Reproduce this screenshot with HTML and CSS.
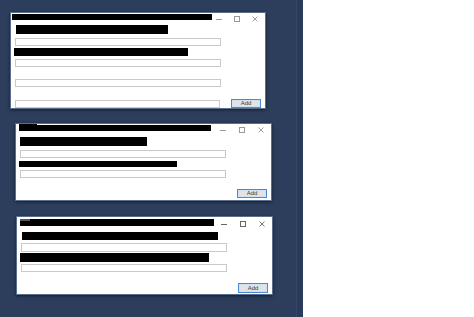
FILE: index.html
```html
<!DOCTYPE html>
<html lang="en">
<head>
<meta charset="utf-8">
<title>Add dialogs</title>
<link rel="stylesheet" href="styles.css">
</head>
<body>
<div class="page">
  <div class="desktop">
    <section class="win win-1">
      <header class="titlebar">
        <div class="redact title"></div>
        <div class="controls">
          <span class="ctl"><svg width="6" height="6" viewBox="0 0 6 6"><path d="M0 3.5H6" stroke="#9a9a9a" stroke-width="1"/></svg></span>
          <span class="ctl"><svg width="6" height="6" viewBox="0 0 6 6"><rect x="0.5" y="0.5" width="5" height="5" fill="none" stroke="#9a9a9a" stroke-width="1"/></svg></span>
          <span class="ctl"><svg width="6" height="6" viewBox="0 0 6 6"><path d="M0.5 0.5L5.5 5.5M5.5 0.5L0.5 5.5" stroke="#9a9a9a" stroke-width="0.9"/></svg></span>
        </div>
      </header>
      <div class="body">
        <div class="redact label l1"></div>
        <div class="field f1"></div>
        <div class="redact label l2"></div>
        <div class="field f2"></div>
        <div class="field f3"></div>
        <div class="row r-last">
          <div class="field"></div>
          <button class="btn" type="button">Add</button>
        </div>
      </div>
    </section>

    <section class="win win-2">
      <header class="titlebar">
        <div class="redact title"><span class="notch"></span></div>
        <div class="controls">
          <span class="ctl"><svg width="6" height="6" viewBox="0 0 6 6"><path d="M0 3.5H6" stroke="#9a9a9a" stroke-width="1"/></svg></span>
          <span class="ctl"><svg width="6" height="6" viewBox="0 0 6 6"><rect x="0.5" y="0.5" width="5" height="5" fill="none" stroke="#9a9a9a" stroke-width="1"/></svg></span>
          <span class="ctl"><svg width="6" height="6" viewBox="0 0 6 6"><path d="M0.5 0.5L5.5 5.5M5.5 0.5L0.5 5.5" stroke="#9a9a9a" stroke-width="0.9"/></svg></span>
        </div>
      </header>
      <div class="body">
        <div class="redact label l1"></div>
        <div class="field f1"></div>
        <div class="redact label l2"></div>
        <div class="field f2"></div>
        <div class="row r-last">
          <button class="btn" type="button">Add</button>
        </div>
      </div>
    </section>

    <section class="win win-3">
      <header class="titlebar">
        <div class="redact title"><span class="notch"></span></div>
        <div class="controls">
          <span class="ctl"><svg width="6" height="6" viewBox="0 0 6 6"><path d="M0 3.5H6" stroke="#666" stroke-width="1"/></svg></span>
          <span class="ctl"><svg width="6" height="6" viewBox="0 0 6 6"><rect x="0.5" y="0.5" width="5" height="5" fill="none" stroke="#666" stroke-width="1"/></svg></span>
          <span class="ctl"><svg width="6" height="6" viewBox="0 0 6 6"><path d="M0.5 0.5L5.5 5.5M5.5 0.5L0.5 5.5" stroke="#666" stroke-width="0.9"/></svg></span>
        </div>
      </header>
      <div class="body">
        <div class="redact label l1"></div>
        <div class="field f1"></div>
        <div class="redact label l2"></div>
        <div class="field f2"></div>
        <div class="row r-last">
          <button class="btn" type="button">Add</button>
        </div>
      </div>
    </section>
  </div>
  <div class="rest"></div>
</div>
</body>
</html>
```

FILE: styles.css
```css
html, body {
  margin: 0;
  padding: 0;
  background: #ffffff;
  font-family: "Liberation Sans", Arial, sans-serif;
}

.page {
  display: flex;
  width: 474px;
  height: 317px;
}

.desktop {
  position: relative;
  width: 303px;
  height: 317px;
  background: #2d3e5d;
  box-shadow: inset -6px 0 0 #2a3a58, inset -7px 0 0 #34476a;
}

.rest {
  flex: 1;
  background: #ffffff;
}

.win {
  position: absolute;
  box-sizing: border-box;
  background: #ffffff;
  border: 1px solid #5c6e8e;
  box-shadow: 0 1px 3px rgba(0, 0, 0, 0.55);
}

.win-1 { left: 10px; top: 12px; width: 256px; height: 97px; }
.win-2 { left: 15px; top: 123px; width: 257px; height: 78px; }
.win-3 { left: 16px; top: 216px; width: 257px; height: 79px; }

.titlebar {
  display: flex;
  align-items: flex-start;
  height: 10px;
  padding: 1px 0 0 1px;
}

.redact {
  background: #000000;
}

.title {
  position: relative;
  height: 6px;
}

.win-1 .title { width: 200px; }
.win-2 .title { width: 192px; margin-left: 2px; }
.win-3 .title { width: 194px; margin-left: 2px; margin-top: 1px; height: 7px; }

.notch {
  position: absolute;
  left: 0;
  top: -1px;
  width: 18px;
  height: 3px;
  background: #000000;
}

.win-3 .notch { width: 10px; height: 2px; top: 0; background: #555; }

.controls {
  display: flex;
  margin-left: auto;
  margin-right: 5px;
  gap: 12px;
  padding-top: 2px;
}

.ctl {
  display: flex;
  width: 6px;
  height: 6px;
}

.win-1 .controls { margin-right: 7px; }
.win-2 .controls { margin-right: 7px; gap: 13px; }
.win-3 .controls { margin-right: 7px; gap: 13px; padding-top: 3px; }

.body {
  display: flex;
  flex-direction: column;
  align-items: flex-start;
  padding-left: 4px;
}

.label {
  height: 8px;
}

.field {
  box-sizing: border-box;
  width: 206px;
  height: 8px;
  border: 1px solid #c9c9c9;
  background: #ffffff;
}

.row {
  display: flex;
  align-self: stretch;
  align-items: center;
  justify-content: flex-end;
  gap: 11px;
  padding-right: 4px;
}

.btn {
  box-sizing: border-box;
  width: 30px;
  height: 9px;
  padding: 0;
  border: 1px solid #4a8ad0;
  background: #e3e3e3;
  box-shadow: inset 0 0 0 1px #cfe1f5;
  color: #3a3a3a;
  font-family: "Liberation Sans", Arial, sans-serif;
  font-size: 6px;
  line-height: 7px;
}

/* window 1 */
.win-1 .l1 { width: 152px; height: 9px; margin: 1px 0 0 1px; }
.win-1 .f1 { margin-top: 4px; }
.win-1 .l2 { width: 174px; margin: 2px 0 0 -1px; }
.win-1 .f2 { margin-top: 3px; }
.win-1 .f3 { margin-top: 12px; }
.win-1 .r-last { margin-top: 12px; justify-content: flex-start; }

/* window 2 */
.win-2 .l1 { width: 127px; height: 9px; margin-top: 2px; }
.win-2 .f1 { margin-top: 4px; }
.win-2 .l2 { width: 158px; height: 6px; margin: 3px 0 0 -1px; }
.win-2 .f2 { margin-top: 3px; }
.win-2 .r-last { margin-top: 11px; }

/* window 3 */
.win-3 .l1 { width: 196px; height: 8px; margin: 4px 0 0 1px; }
.win-3 .f1 { margin-top: 3px; height: 9px; }
.win-3 .l2 { width: 189px; height: 9px; margin: 1px 0 0 -1px; }
.win-3 .f2 { margin-top: 2px; }
.win-3 .r-last { margin-top: 11px; }
.win-3 .btn { height: 10px; }
```
